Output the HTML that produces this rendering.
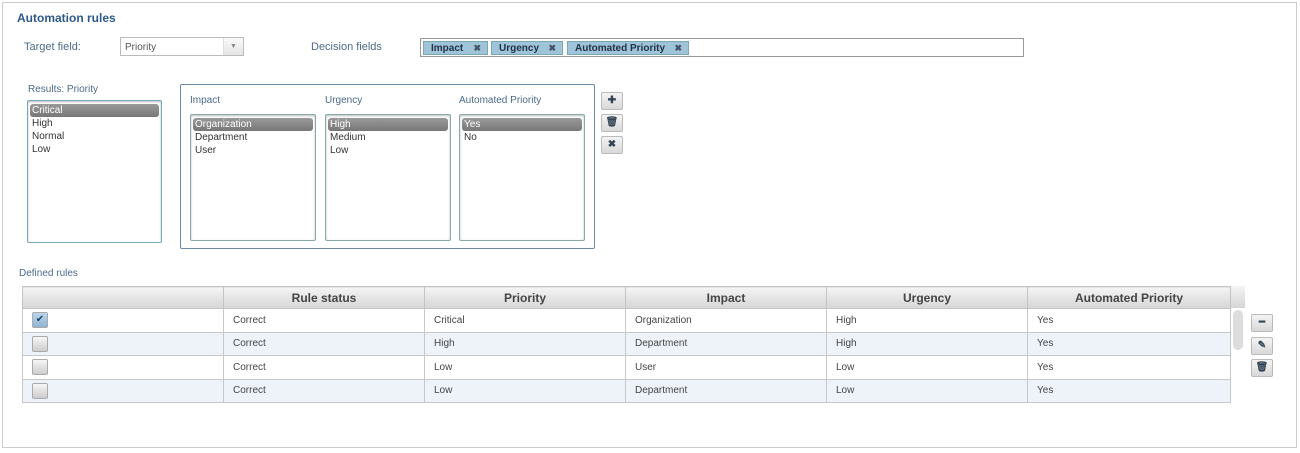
<!DOCTYPE html>
<html><head><style>
*{box-sizing:border-box;margin:0;padding:0}
body{width:1300px;height:453px;background:#fff;font-family:"Liberation Sans",sans-serif;font-size:10px;color:#333;position:relative;overflow:hidden}
.a{position:absolute}
.lbl{color:#4a6a8a;font-size:11px}
.list{position:absolute;border:1px solid #8aa;border-radius:2px;background:#fff;box-shadow:inset 0 1px 2px #bbb;padding:3px 2px;font-size:10px;line-height:13px}
.sel{background:linear-gradient(#999,#777);color:#fff;border-radius:3px;padding-left:2px}
.it{padding-left:2px}
.btn{position:absolute;width:22px;height:18px;border:1px solid #bbb;border-radius:2px;background:linear-gradient(#f4f4f4,#d8d8d8);color:#345;font-size:10px;text-align:center;line-height:16px;font-weight:bold}
.tag{position:absolute;top:2px;height:14px;background:#9fc3d8;border:1px solid #7aa;color:#234;font-weight:bold;font-size:10px;line-height:13px;padding-left:7px}
.tag b{position:absolute;right:6px;color:#456;font-size:9px}
table{position:absolute;left:22px;top:286px;border-collapse:collapse;font-size:10px}
th{height:22px;background:linear-gradient(#f4f4f4,#d6d6d6);border:1px solid #c4c4c4;font-size:12px;color:#444;font-weight:bold;width:201px}
td{height:23.5px;border:1px solid #c8c8c8;padding-left:9px;color:#444}
tr.o td{background:#eef3fa}
.cb{width:16px;height:16px;border:1px solid #aaa;border-radius:2px;background:linear-gradient(#f6f6f6,#ccc)}
</style></head><body>
<div class="a" style="left:2px;top:2px;width:1295px;height:446px;border:1px solid #ccc"></div>
<div class="a" style="left:17px;top:11px;font-size:12px;font-weight:bold;color:#2e5a8a">Automation rules</div>
<div class="a lbl" style="left:24px;top:41px">Target field:</div>
<div class="a" style="left:120px;top:37px;width:124px;height:19px;border:1px solid #bbb;background:#fff;font-size:10px;color:#555;padding:4px 0 0 4px">Priority<div class="a" style="right:0;top:0;width:20px;height:17px;border-left:1px solid #ddd;background:linear-gradient(#fafafa,#e4e4e4);color:#888;font-size:7px;text-align:center;line-height:17px">▼</div></div>
<div class="a lbl" style="left:311px;top:41px">Decision fields</div>
<div class="a" style="left:420px;top:38px;width:604px;height:19px;border:1px solid #999;background:#fff">
<div class="tag" style="left:2px;width:65px">Impact<b>✖</b></div>
<div class="tag" style="left:70px;width:72px">Urgency<b>✖</b></div>
<div class="tag" style="left:146px;width:122px">Automated Priority<b>✖</b></div>
</div>
<div class="a lbl" style="left:28px;top:84px;font-size:10px">Results: Priority</div>
<div class="list" style="left:27px;top:100px;width:135px;height:143px;border-color:#7ab"><div class="sel">Critical</div><div class="it">High</div><div class="it">Normal</div><div class="it">Low</div></div>
<div class="a" style="left:180px;top:84px;width:415px;height:165px;border:1px solid #6a8aa8;border-radius:2px"></div>
<div class="a lbl" style="left:190px;top:95px;font-size:10px">Impact</div>
<div class="a lbl" style="left:325px;top:95px;font-size:10px">Urgency</div>
<div class="a lbl" style="left:459px;top:95px;font-size:10px">Automated Priority</div>
<div class="list" style="left:190px;top:114px;width:126px;height:127px"><div class="sel">Organization</div><div class="it">Department</div><div class="it">User</div></div>
<div class="list" style="left:325px;top:114px;width:126px;height:127px"><div class="sel">High</div><div class="it">Medium</div><div class="it">Low</div></div>
<div class="list" style="left:459px;top:114px;width:126px;height:127px"><div class="sel">Yes</div><div class="it">No</div></div>
<div class="btn" style="left:601px;top:92px">✚</div>
<div class="btn" style="left:601px;top:114px">🗑</div>
<div class="btn" style="left:601px;top:136px">✖</div>
<div class="a lbl" style="left:19px;top:268px;font-size:10px">Defined rules</div>
<div class="a" style="left:1231px;top:286px;width:14px;height:22px;background:linear-gradient(#f4f4f4,#d6d6d6)"></div>
<div class="a" style="left:1233px;top:310px;width:10px;height:40px;background:#ddd;border-radius:5px"></div>
<table>
<tr><th></th><th>Rule status</th><th>Priority</th><th>Impact</th><th>Urgency</th><th style="width:203px">Automated Priority</th></tr>
<tr><td><div class="cb" style="background:linear-gradient(#bcd6ea,#8fb4d4);color:#246;font-size:10px;line-height:14px;text-align:center">✔</div></td><td>Correct</td><td>Critical</td><td>Organization</td><td>High</td><td>Yes</td></tr>
<tr class="o"><td><div class="cb"></div></td><td>Correct</td><td>High</td><td>Department</td><td>High</td><td>Yes</td></tr>
<tr><td><div class="cb"></div></td><td>Correct</td><td>Low</td><td>User</td><td>Low</td><td>Yes</td></tr>
<tr class="o"><td><div class="cb"></div></td><td>Correct</td><td>Low</td><td>Department</td><td>Low</td><td>Yes</td></tr>
</table>
<div class="btn" style="left:1251px;top:314px">━</div>
<div class="btn" style="left:1251px;top:337px">✎</div>
<div class="btn" style="left:1251px;top:359px">🗑</div>
</body></html>
